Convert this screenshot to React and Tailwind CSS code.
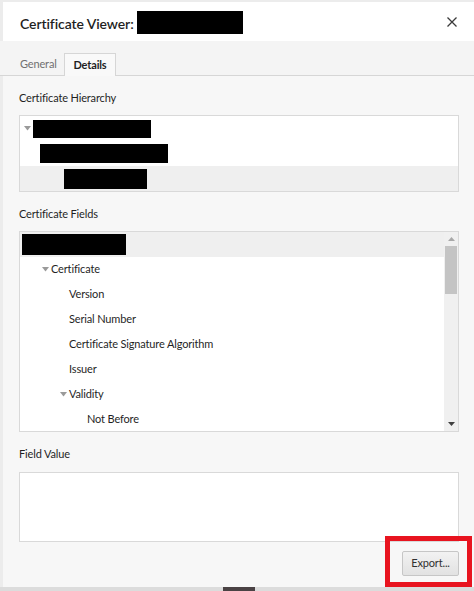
import React from "react";

const fieldRows = [
  { label: null, depth: 0, selected: true, redact: 104 },
  { label: "Certificate", depth: 1, open: true },
  { label: "Version", depth: 2 },
  { label: "Serial Number", depth: 2 },
  { label: "Certificate Signature Algorithm", depth: 2 },
  { label: "Issuer", depth: 2 },
  { label: "Validity", depth: 2, open: true },
  { label: "Not Before", depth: 3 },
];

function Caret() {
  return (
    <svg width="7" height="5" viewBox="0 0 7 5" className="shrink-0">
      <path d="M0 0 H7 L3.5 4.5 Z" fill="#9a9a9a" />
    </svg>
  );
}

function Redacted({ w, h = 18 }) {
  return <div className="bg-black" style={{ width: w, height: h }} />;
}

function ScrollArrow({ up }) {
  return (
    <svg width="7" height="4" viewBox="0 0 7 4">
      <path d={up ? "M0 4 H7 L3.5 0 Z" : "M0 0 H7 L3.5 4 Z"} fill={up ? "#a8a8a8" : "#404040"} />
    </svg>
  );
}

export default function App() {
  return (
    <div className="relative w-[474px] h-[591px] overflow-hidden bg-[#f7f7f7] font-['Lato','Liberation_Sans',sans-serif] text-[#1f1f1f] text-[11px] tracking-[-0.15px]">
      <div className="flex flex-col h-full border-l-[3px] border-[#ececec]">
        {/* Title bar */}
        <div className="h-[41px] bg-white border-t-2 border-[#ececec] flex items-center pl-[17px] pr-[17px]">
          <span className="w-[117px] shrink-0 text-[14px] font-semibold tracking-[-0.1px] leading-none mt-[4px] whitespace-nowrap">
            Certificate Viewer:
          </span>
          <div className="mt-[2px] w-[106px] h-[23px] bg-black" />
          <div className="flex-1" />
          <svg width="10" height="10" viewBox="0 0 10 10" className="mt-[1px]">
            <path d="M0.5 0.5 L9.5 9.5 M9.5 0.5 L0.5 9.5" stroke="#3a3a3a" strokeWidth="1.3" />
          </svg>
        </div>

        {/* Tabs */}
        <div className="h-[35px] bg-[#f4f4f4] border-b border-[#d6d6d6] flex items-end -ml-[3px] pl-[20px]">
          <div className="h-[22px] w-[44px] flex items-center text-[#707070]">General</div>
          <div className="h-[23px] -mb-px w-[52px] flex items-center justify-center font-bold bg-[#f9f9f9] border border-b-0 border-[#d6d6d6]">
            Details
          </div>
        </div>

        {/* Body */}
        <div className="flex-1 pl-[16px] pr-[15px] flex flex-col">
          <div className="mt-[14px] h-[16px] leading-[16px]">Certificate Hierarchy</div>
          <div className="mt-[9px] h-[77px] bg-white border border-[#d9d9d9] flex flex-col">
            <div className="h-[25px] flex items-center pl-[4px] gap-[2px]">
              <Caret />
              <Redacted w={118} />
            </div>
            <div className="h-[25px] flex items-center pl-[20px]">
              <Redacted w={128} h={19} />
            </div>
            <div className="h-[25px] flex items-center pl-[44px] bg-[#efefef]">
              <Redacted w={83} h={20} />
            </div>
          </div>

          <div className="mt-[14px] h-[16px] leading-[16px]">Certificate Fields</div>
          <div className="mt-[9px] h-[201px] bg-white border border-[#d9d9d9] flex overflow-hidden">
            <div className="flex-1 flex flex-col">
              {fieldRows.map((row, i) => (
                <div
                  key={i}
                  className={`h-[25px] shrink-0 flex items-center ${row.selected ? "bg-[#efefef] pl-[2px]" : ""}`}
                  style={row.selected ? undefined : { paddingLeft: 13 + row.depth * 18 - (row.open ? 9 : 0) }}
                >
                  {row.selected ? (
                    <Redacted w={row.redact} h={21} />
                  ) : (
                    <>
                      {row.open && (
                        <span className="mr-[2px]">
                          <Caret />
                        </span>
                      )}
                      <span>{row.label}</span>
                    </>
                  )}
                </div>
              ))}
            </div>
            <div className="w-[14px] bg-[#f0f0f0] flex flex-col items-center">
              <div className="h-[14px] flex items-center justify-center">
                <ScrollArrow up />
              </div>
              <div className="w-[12px] h-[48px] bg-[#c4c4c4]" />
              <div className="flex-1" />
              <div className="h-[14px] flex items-center justify-center">
                <ScrollArrow />
              </div>
            </div>
          </div>

          <div className="mt-[14px] h-[16px] leading-[16px]">Field Value</div>
          <div className="mt-[10px] h-[70px] bg-white border border-[#d9d9d9]" />

          <div className="mt-[9px] flex justify-end">
            <button className="w-[57px] h-[25px] text-[#303030] bg-gradient-to-b from-[#f2f2f2] to-[#e2e2e2] border border-[#c6c6c6] rounded-[2px]">
              Export...
            </button>
          </div>
        </div>

        {/* Bottom edge */}
        <div className="h-[4px] bg-[#dcdcdc] flex -ml-[3px]">
          <div className="w-[223px]" />
          <div className="w-[32px] bg-[#4a4244]" />
        </div>
      </div>

      {/* Highlight frame around the export button */}
      <div className="absolute left-[385px] top-[536px] w-[87px] h-[51px] border-[5px] border-[#e8141f]" />
    </div>
  );
}
